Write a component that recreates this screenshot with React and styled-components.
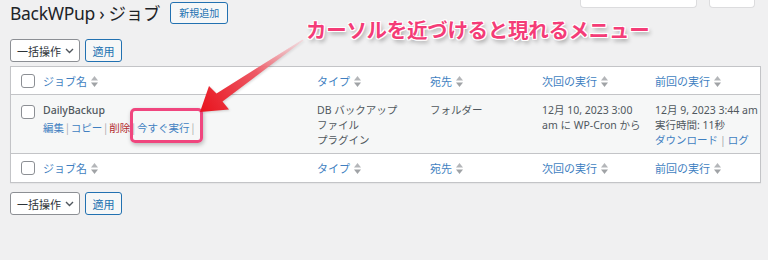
import React from 'react';
import styled, { createGlobalStyle } from 'styled-components';

const GlobalStyle = createGlobalStyle`
	html, body {
		margin: 0;
		padding: 0;
		background: #f0f0f1;
	}
	body {
		font-family: 'Noto Sans', 'Noto Sans CJK JP', sans-serif;
		color: #3c434a;
		font-size: 12px;
		overflow: hidden;
	}
`;

const columns = [
	{ key: 'name', label: 'ジョブ名' },
	{ key: 'type', label: 'タイプ' },
	{ key: 'dest', label: '宛先' },
	{ key: 'next', label: '次回の実行' },
	{ key: 'last', label: '前回の実行' },
];

function SortIcon() {
	return (
		<SortSvg width="7" height="11" viewBox="0 0 7 11">
			<path d="M3.5 0 L7 4.5 L0 4.5 Z" fill="#b4b6b9" />
			<path d="M0 6.5 L7 6.5 L3.5 11 Z" fill="#a0a3a6" />
		</SortSvg>
	);
}

function HeaderRow({ bottom }) {
	return (
		<HeadRow bottom={bottom}>
			<CheckCell>
				<Checkbox />
			</CheckCell>
			{columns.map(col => (
				<HeadCell key={col.key}>
					<HeadLink>{col.label}</HeadLink>
					<SortIcon />
				</HeadCell>
			))}
		</HeadRow>
	);
}

function BulkActions() {
	return (
		<BulkBar>
			<Select>
				一括操作
				<Chevron width="9" height="6" viewBox="0 0 9 6">
					<path d="M1 1 L4.5 4.5 L8 1" stroke="#50575e" strokeWidth="1.4" fill="none" />
				</Chevron>
			</Select>
			<SecondaryButton>適用</SecondaryButton>
		</BulkBar>
	);
}

function Arrow() {
	return (
		<ArrowSvg width="768" height="260" viewBox="0 0 768 260">
			<defs>
				<linearGradient id="arrowGrad" x1="303" y1="40" x2="200" y2="112" gradientUnits="userSpaceOnUse">
					<stop offset="0" stopColor="#f7c6cc" stopOpacity="0.5" />
					<stop offset="0.45" stopColor="#ee5a66" />
					<stop offset="1" stopColor="#e8121c" />
				</linearGradient>
			</defs>
			<polygon
				points="303.4,40.6 302.6,39.4 216.5,93.5 209,86 200,112 229,109.5 222.5,101.5"
				fill="url(#arrowGrad)"
			/>
		</ArrowSvg>
	);
}

export default function App() {
	return (
		<>
			<GlobalStyle />
			<Page>
				<Header>
					<Title>BackWPup › ジョブ</Title>
					<AddButton>新規追加</AddButton>
					<Tabs>
						<Tab wide>表示オプション ▾</Tab>
						<Tab>ヘルプ ▾</Tab>
					</Tabs>
				</Header>
				<BulkActions />
				<Table>
					<HeaderRow />
					<BodyRow>
						<CheckCell>
							<Checkbox />
						</CheckCell>
						<Cell>
							<JobName>DailyBackup</JobName>
							<RowActions>
								<ActionLink>編集</ActionLink>
								<Sep>|</Sep>
								<ActionLink>コピー</ActionLink>
								<Sep>|</Sep>
								<ActionLink danger>削除</ActionLink>
								<Sep>|</Sep>
								<ActionLink>今すぐ実行</ActionLink>
								<Sep>|</Sep>
							</RowActions>
						</Cell>
						<Cell>
							<Line>DB バックアップ</Line>
							<Line>ファイル</Line>
							<Line>プラグイン</Line>
						</Cell>
						<Cell>
							<Line>フォルダー</Line>
						</Cell>
						<Cell>
							<Line>12月 10, 2023 3:00</Line>
							<Line>am に WP-Cron から</Line>
						</Cell>
						<Cell>
							<Line>12月 9, 2023 3:44 am</Line>
							<Line>実行時間: 11秒</Line>
							<Line>
								<ActionLink>ダウンロード</ActionLink>
								<Sep tight>|</Sep>
								<ActionLink>ログ</ActionLink>
							</Line>
						</Cell>
					</BodyRow>
					<HeaderRow bottom />
				</Table>
				<BulkActions />
			</Page>
			<Highlight />
			<Arrow />
			<Callout>カーソルを近づけると現れるメニュー</Callout>
		</>
	);
}

const Page = styled.div`
	position: relative;
	height: 260px;
	padding: 0 7px 0 10px;
	box-sizing: border-box;
`;

const Header = styled.header`
	display: flex;
	align-items: flex-start;
	height: 26px;
`;

const Title = styled.h1`
	margin: 0;
	font-family: 'Noto Sans', 'Noto Sans CJK JP', sans-serif;
	font-size: 17.5px;
	font-weight: 400;
	line-height: 26px;
	color: #1d2327;
	letter-spacing: -0.3px;
`;

const AddButton = styled.button`
	margin: 2px 0 0 10px;
	height: 22px;
	padding: 0 8px;
	border: 1px solid #2271b1;
	border-radius: 3px;
	background: #f6f7f7;
	color: #2271b1;
	font-family: 'Noto Sans CJK JP', sans-serif;
	font-size: 10px;
	line-height: 20px;
`;

const Tabs = styled.div`
	display: flex;
	gap: 12px;
	margin-left: auto;
	margin-right: 6px;
	margin-top: -20px;
`;

const Tab = styled.div`
	width: ${props => (props.wide ? '117px' : '46px')};
	height: 28px;
	box-sizing: border-box;
	border: 1px solid #dcdcde;
	border-top: none;
	border-radius: 0 0 4px 4px;
	background: #fff;
	color: #646970;
	font-family: 'Noto Sans CJK JP', sans-serif;
	font-size: 11px;
	line-height: 16px;
	text-align: center;
	white-space: nowrap;
	overflow: hidden;
`;

const BulkBar = styled.div`
	display: flex;
	gap: 5px;
	margin-top: 13px;
	margin-bottom: 4px;
`;

const Select = styled.div`
	display: flex;
	align-items: center;
	gap: 4px;
	width: 70px;
	height: 23px;
	box-sizing: border-box;
	padding: 0 5px 0 6px;
	border: 1px solid #8c8f94;
	border-radius: 3px;
	background: #fff;
	color: #2c3338;
	font-family: 'Noto Sans CJK JP', sans-serif;
	font-size: 11px;
	white-space: nowrap;
`;

const Chevron = styled.svg`
	flex-shrink: 0;
	display: block;
`;

const SecondaryButton = styled.button`
	width: 37px;
	height: 23px;
	padding: 0;
	border: 1px solid #2271b1;
	border-radius: 3px;
	background: #f6f7f7;
	color: #2271b1;
	font-family: 'Noto Sans CJK JP', sans-serif;
	font-size: 11px;
`;

const Table = styled.div`
	border: 1px solid #c3c4c7;
	background: #fff;
	box-shadow: 0 1px 1px rgba(0, 0, 0, 0.04);
	& + ${BulkBar} {
		margin-top: 9px;
	}
`;

const gridCols = '32px 274px 113px 112px 113px 1fr';

const HeadRow = styled.div`
	display: grid;
	grid-template-columns: ${gridCols};
	align-items: center;
	height: ${props => (props.bottom ? '28px' : '27px')};
	border-bottom: ${props => (props.bottom ? 'none' : '1px solid #c3c4c7')};
	border-top: ${props => (props.bottom ? '1px solid #c3c4c7' : 'none')};
	background: #fff;
`;

const CheckCell = styled.div`
	display: flex;
	justify-content: center;
	padding-left: 2px;
`;

const Checkbox = styled.span`
	display: block;
	width: 12px;
	height: 12px;
	border: 1px solid #8c8f94;
	border-radius: 3px;
	background: #fff;
`;

const HeadCell = styled.div`
	display: flex;
	align-items: center;
	gap: 4px;
	font-family: 'Noto Sans CJK JP', sans-serif;
	font-size: 11px;
`;

const HeadLink = styled.span`
	color: #3f7fc1;
`;

const SortSvg = styled.svg`
	display: block;
	margin-top: 1px;
`;

const BodyRow = styled.div`
	display: grid;
	grid-template-columns: ${gridCols};
	align-items: start;
	height: 58px;
	box-sizing: border-box;
	padding-top: 8px;
	background: #f6f7f7;
	& > ${CheckCell} {
		padding-top: 2px;
	}
`;

const Cell = styled.div`
	font-family: 'Noto Sans', 'Noto Sans CJK JP', sans-serif;
	font-size: 10.5px;
	line-height: 15px;
	color: #50575e;
	white-space: nowrap;
`;

const JobName = styled.div`
	font-weight: 500;
	color: #50575e;
	margin-bottom: 2px;
`;

const RowActions = styled.div`
	font-family: 'Noto Sans CJK JP', sans-serif;
	font-size: 10.5px;
`;

const Line = styled.div`
	font-family: 'Noto Sans', 'Noto Sans CJK JP', sans-serif;
`;

const ActionLink = styled.span`
	color: ${props => (props.danger ? '#b32d2e' : '#3f7fc1')};
`;

const Sep = styled.span`
	color: #a7aaad;
	margin: 0 2px;
`;

const Highlight = styled.div`
	position: absolute;
	left: 130px;
	top: 108px;
	width: 73px;
	height: 35px;
	box-sizing: border-box;
	border: 3px solid #f0467e;
	border-radius: 5px;
	box-shadow: 1px 2px 4px rgba(0, 0, 0, 0.25);
`;

const ArrowSvg = styled.svg`
	position: absolute;
	left: 0;
	top: 0;
	pointer-events: none;
	filter: drop-shadow(1px 1px 1px rgba(0, 0, 0, 0.15));
`;

const Callout = styled.div`
	position: absolute;
	left: 306px;
	top: 15px;
	font-family: 'Noto Sans CJK JP', sans-serif;
	font-size: 20.5px;
	font-weight: 700;
	line-height: 28px;
	color: #f43c77;
	white-space: nowrap;
	letter-spacing: -0.3px;
	text-shadow: -1px -1px 0 #fff, 1px -1px 0 #fff, -1px 1px 0 #fff, 1px 1px 0 #fff,
		0 -1px 0 #fff, 0 1px 0 #fff, -1px 0 0 #fff, 1px 0 0 #fff, 2px 3px 4px rgba(0, 0, 0, 0.35);
`;
